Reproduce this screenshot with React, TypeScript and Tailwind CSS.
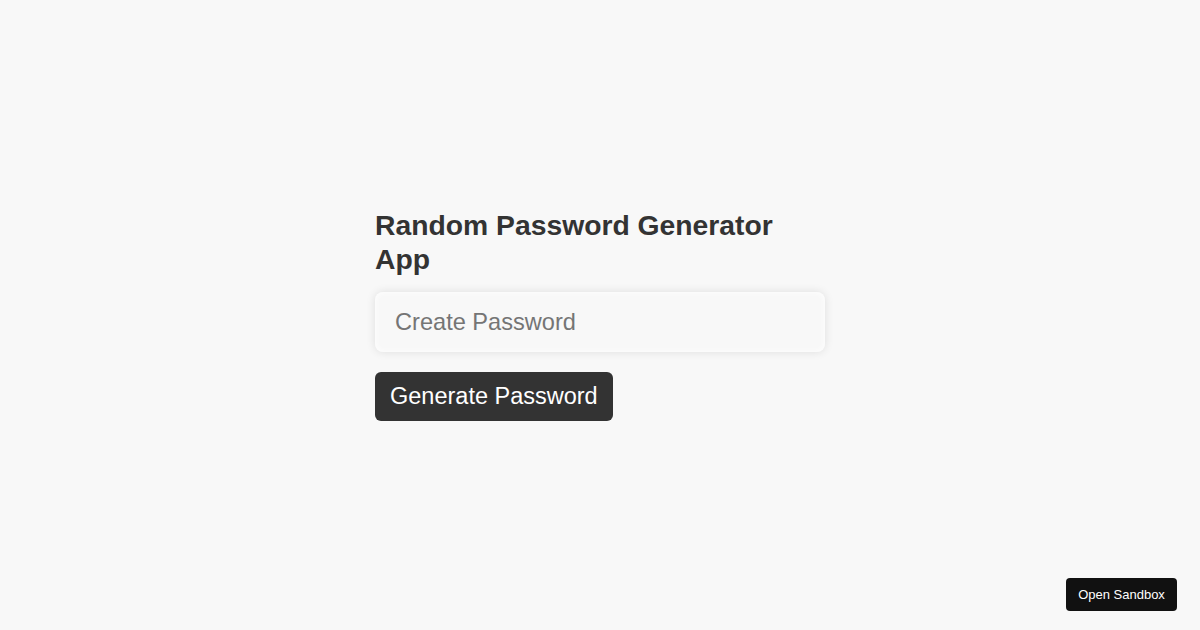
import React, { useState } from 'react';

export default function App() {
  const [password, setPassword] = useState('');

  const generate = () => {
    const chars = 'ABCDEFGHIJKLMNOPQRSTUVWXYZabcdefghijklmnopqrstuvwxyz0123456789!@#$%^&*';
    let out = '';
    for (let i = 0; i < 12; i++) out += chars[Math.floor(Math.random() * chars.length)];
    setPassword(out);
  };

  return (
    <div className="min-h-[630px] w-full bg-[#f8f8f8] flex items-center justify-center font-['Liberation_Sans',Arial,sans-serif] text-[#333]">
      <div className="w-[450px] flex flex-col items-start">
        <h1 className="text-[28.3px] leading-[1.2] font-bold text-[#333] mb-4">
          Random Password Generator App
        </h1>
        <input
          type="text"
          value={password}
          readOnly
          placeholder="Create Password"
          className="w-full h-[60px] px-5 text-[23.6px] bg-[#f8f8f8] rounded-lg outline-none shadow-[0_0_10px_rgba(0,0,0,0.11),inset_0_0_6px_#ffffff] placeholder:text-[#757575] text-[#333]"
        />
        <button
          onClick={generate}
          className="mt-5 h-[49px] px-[15px] bg-[#333] text-white text-[23.5px] rounded-md"
        >
          Generate Password
        </button>
      </div>

      {/* sandbox badge */}
      <button className="fixed right-[23px] bottom-[19px] w-[111px] h-[33px] bg-[#111] text-white text-[13px] rounded font-['Liberation_Sans',Arial,sans-serif]">
        Open Sandbox
      </button>
    </div>
  );
}
